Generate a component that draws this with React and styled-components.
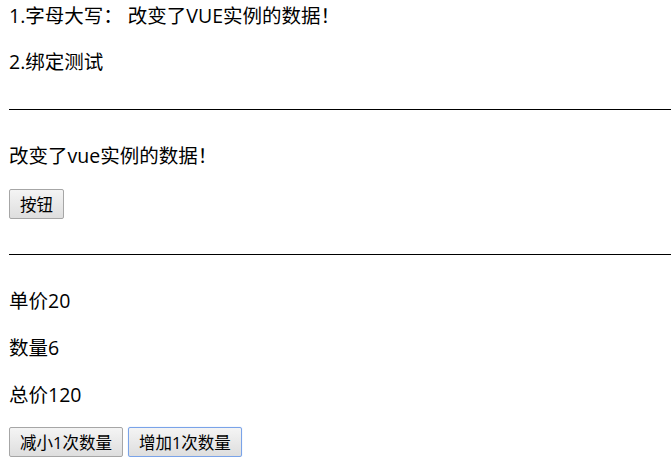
import styled, { createGlobalStyle } from "styled-components";

const GlobalStyle = createGlobalStyle`
  html, body {
    margin: 0;
    padding: 0;
    background: #fff;
  }
  body {
    font-family: "Open Sans", "Noto Sans CJK SC", sans-serif;
    color: #000;
  }
`;

const App = () => {
  return (
    <>
      <GlobalStyle />
      <Page>
        <Section $gap={22}>
          <Para>1.字母大写： 改变了VUE实例的数据！</Para>
          <Para>2.绑定测试</Para>
        </Section>

        <Rule />

        <Section $gap={21}>
          <Para>改变了vue实例的数据！</Para>
          <Button>按钮</Button>
        </Section>

        <Rule />

        <Section $gap={23}>
          <Para>单价20</Para>
          <Para>数量6</Para>
          <Para>总价120</Para>
          <ButtonRow>
            <Button>减小1次数量</Button>
            <Button $focused>增加1次数量</Button>
          </ButtonRow>
        </Section>
      </Page>
    </>
  );
};

export default App;

const Page = styled.div`
  display: flex;
  flex-direction: column;
  padding: 4px 0 0 9px;
`;

const Section = styled.section`
  display: flex;
  flex-direction: column;
  align-items: flex-start;
  gap: ${(p) => p.$gap}px;
`;

const Para = styled.p`
  margin: 0;
  font-size: 19.5px;
  line-height: 24px;
  white-space: pre;
`;

const Rule = styled.hr`
  margin: 35px 0 34px;
  border: none;
  border-top: 1px solid #000;
  height: 0;
`;

const ButtonRow = styled.div`
  display: flex;
  gap: 5px;
  margin-top: -3px;
`;

const Button = styled.button`
  box-sizing: border-box;
  height: 30px;
  padding: 0 10px;
  font-family: "Open Sans", "Noto Sans CJK SC", sans-serif;
  font-size: 16.5px;
  color: #000;
  background: linear-gradient(#f4f4f4, #dedede);
  border: 1px solid ${(p) => (p.$focused ? "#7aa3e8" : "#a6a6a6")};
  border-radius: 2px;
  box-shadow: ${(p) => (p.$focused ? "0 0 1px #9dbef0" : "none")};
`;
